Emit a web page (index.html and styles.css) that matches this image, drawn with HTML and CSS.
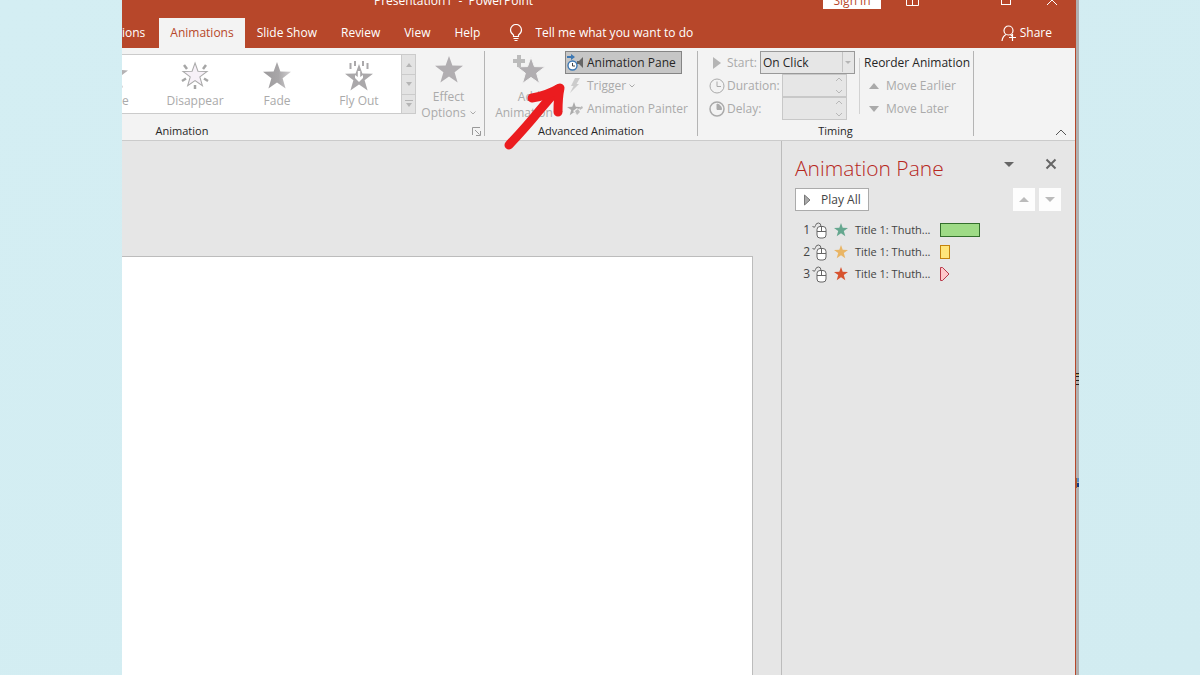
FILE: index.html
```html
<!DOCTYPE html>
<html lang="en">
<head>
<meta charset="utf-8">
<title>Presentation1 - PowerPoint</title>
<link rel="stylesheet" href="styles.css">
</head>
<body>
<svg class="defs" aria-hidden="true">
  <defs>
    <path id="star" d="M14 0 L17.4 9.6 L28 9.8 L19.6 16.2 L22.6 26.5 L14 20.4 L5.4 26.5 L8.4 16.2 L0 9.8 L10.6 9.6 Z"/>
    <linearGradient id="fade"><stop offset="0" stop-color="#9c9a9c"/><stop offset=".55" stop-color="#a8a6a8"/><stop offset="1" stop-color="#d2d0d2"/></linearGradient>
    <g id="mouse" fill="none" stroke="#666">
      <path d="M.5 4.500 Q3 6.500 3.500 3.500 Q4 1 6.500 1 Q9 1 9 4.500"/>
      <rect x="5" y="4.500" width="9" height="11.500" rx="3" fill="#fff"/>
      <path d="M5 9.500H14M9.500 4.500V9.500"/>
    </g>
  </defs>
</svg>
<div class="window">
  <div class="app">
    <header class="titlebar">
      <span class="title">Presentation1&nbsp; -&nbsp; PowerPoint</span>
      <button class="signin">Sign in</button>
      <button class="winbtn display" aria-label="Ribbon display options"><svg width="14" height="12"><path d="M.5.500H12.500V11.500H.5ZM.5 5.500H12.500M6.500 5.500V11.500" fill="none" stroke="#fff"/></svg></button>
      <button class="winbtn maximize" aria-label="Maximize"><svg width="12" height="10"><rect x="1.500" y=".5" width="9" height="9" fill="none" stroke="#fff"/></svg></button>
      <button class="winbtn" aria-label="Close"><svg width="12" height="10"><path d="M1 0L11 10M11 0L1 10" stroke="#fff"/></svg></button>
    </header>
    <nav class="tabs">
      <a class="tab cut" href="#">ions</a>
      <a class="tab active" href="#">Animations</a>
      <a class="tab" href="#">Slide Show</a>
      <a class="tab" href="#">Review</a>
      <a class="tab" href="#">View</a>
      <a class="tab" href="#">Help</a>
      <button class="tell"><svg width="14" height="18" fill="none" stroke="#fff" stroke-width="1.200"><path d="M4.500 12.500V11Q1.500 9 1.500 6A5.500 5.500 0 0 1 12.500 6Q12.500 9 9.500 11V12.500ZM4.500 14.500H9.500M5.500 16.500H8.500"/></svg>Tell me what you want to do</button>
      <button class="share"><svg width="16" height="17" fill="none" stroke="#fff" stroke-width="1.200"><circle cx="7.500" cy="5.500" r="4.500"/><path d="M1 16Q1.500 11.500 5 9.500M9.500 9.500L11 11M11.500 9V16M8 12.500H15"/></svg>Share</button>
    </nav>
    <section class="ribbon">
      <div class="group animation">
        <div class="tools">
          <div class="gallery">
            <button class="effect partial"><svg width="32" height="28"><path d="M0 9L6 9.500L0 14ZM0 24L1 27L0 26Z" fill="#b4b2b4"/></svg><span>e</span></button>
            <button class="effect"><svg width="30" height="28"><g transform="translate(3 2) scale(.86)"><use href="#star" fill="#f7f1f8" stroke="#aaa" stroke-width="1.200"/></g><path d="M4 4L7 8M26 4L23 8M2 20L6 17.500M28 20L24 17.500M15 24V28" stroke="#a6a6a6" stroke-width="2.500"/></svg><span>Disappear</span></button>
            <button class="effect"><svg width="28" height="28"><use href="#star" y="1" fill="url(#fade)"/></svg><span>Fade</span></button>
            <button class="effect"><svg width="28" height="30" viewBox="0 -1 28 30"><use href="#star" y="2" fill="#aaa8aa"/><path d="M5.500 1V7M10 -1V5M18 -1V5M22.500 1V7" stroke="#fff" stroke-width="4"/><path d="M5.500 1V7M10 -1V4M18 -1V4M22.500 1V7" stroke="#aaa8aa" stroke-width="2"/><path d="M12.800 9H15.200V15L18 13V16L14 20L10 16V13L12.800 15Z" fill="#fff"/></svg><span>Fly Out</span></button>
          </div>
          <div class="scroller">
            <button aria-label="Row up"><svg width="6" height="4"><path d="M0 4L3 0L6 4Z"/></svg></button>
            <button aria-label="Row down"><svg width="6" height="4"><path d="M0 0L3 4L6 0Z"/></svg></button>
            <button aria-label="More"><svg width="8" height="7"><path d="M0 0H8V1H0ZM1 3L4 7L7 3Z"/></svg></button>
          </div>
          <button class="big options"><svg width="28" height="28"><use href="#star" y="1" fill="#b1aeb1"/></svg><span>Effect</span><span>Options <svg class="caret" width="6" height="4"><path d="M.5.500L3 3L5.500.500"/></svg></span></button>
        </div>
        <h2>Animation</h2>
        <button class="launcher" aria-label="More animation options"><svg width="9" height="9" fill="none" stroke="#999"><path d="M.5 8V.500H8M3 3L7.500 7.500M4 8.500H8.500V4"/></svg></button>
      </div>
      <div class="group advanced">
        <div class="tools">
          <button class="big add"><svg width="32" height="30"><use href="#star" x="4" y="2" fill="#b1aeb1" stroke="#f3f3f3"/><path d="M4 0H8V4H12V8H8V12H4V8H0V4H4Z" fill="#bbb"/></svg><span>Add</span><span>Animation <svg class="caret" width="6" height="4"><path d="M.5.500L3 3L5.500.500"/></svg></span></button>
          <div class="stack">
            <button class="small pressed"><svg width="17" height="18"><path d="M0 2H4V0L8 3L4 6V4H0Z" fill="#3c78b4"/><circle cx="5.500" cy="11.500" r="4.500" fill="#fff" stroke="#3c78b4" stroke-width="1.400"/><path d="M5.500 9V12H8" fill="none" stroke="#444"/><path d="M10 7H12L16 3V14L12 10H10Z" fill="#666"/></svg>Animation Pane</button>
            <button class="small"><svg width="17" height="18"><path d="M8 1H13L9.500 7H12L3 16L6.500 9H4Z" fill="#ccc"/></svg>Trigger <svg class="caret" width="6" height="4"><path d="M.5.500L3 3L5.500.500"/></svg></button>
            <button class="small"><svg width="17" height="18"><g transform="translate(0 2) scale(.5)"><use href="#star" fill="#aaa"/></g><path d="M6 11L10 8L15 13L11 16Z" fill="#f3f3f3"/><path d="M8 11L11 9L13 12L10 15ZM12 8L15 6L16 8L13 10Z" fill="#bbb"/></svg>Animation Painter</button>
          </div>
        </div>
        <h2>Advanced Animation</h2>
        <svg class="arrow" width="72" height="108" fill="none" stroke="#eb1c1f" stroke-linecap="round" stroke-linejoin="round"><path d="M7 94Q24 76 37 60Q47 48 56 38" stroke-width="9"/><path d="M30 47Q44 45 58 37Q56 46 56 61" stroke-width="9"/></svg>
      </div>
      <div class="group timing">
        <div class="tools">
          <div class="fields">
            <svg width="16" height="16"><path d="M4 2L12 8L4 14Z" fill="#b5b5b5"/></svg>
            <label for="start">Start:</label>
            <div class="control start"><select id="start"><option>On Click</option></select><svg width="12" height="20"><path d="M.5 0V20" stroke="#c4c4c4"/><path d="M3 9H9L6 12Z" fill="#b5b5b5"/></svg></div>
            <svg width="16" height="16" fill="none" stroke="#aaa"><circle cx="8" cy="8" r="7"/><path d="M8 3.500V8.500H12"/></svg>
            <label for="duration">Duration:</label>
            <div class="control"><input id="duration" type="text" disabled><svg width="8" height="17"><path d="M1 4L4 1L7 4M1 13L4 16L7 13"/></svg></div>
            <svg width="16" height="16" fill="none" stroke="#aaa"><circle cx="8" cy="8" r="7" stroke-width="1.500"/><path d="M8 3V8.500H12.500Q12.500 4 8 3Z" fill="#aaa"/></svg>
            <label for="delay">Delay:</label>
            <div class="control"><input id="delay" type="text" disabled><svg width="8" height="17"><path d="M1 4L4 1L7 4M1 13L4 16L7 13"/></svg></div>
          </div>
          <div class="divider"></div>
          <div class="reorder">
            <span class="heading">Reorder Animation</span>
            <button class="move"><svg width="10" height="6"><path d="M0 6L5 0L10 6Z"/></svg>Move Earlier</button>
            <button class="move"><svg width="10" height="6"><path d="M0 0L5 6L10 0Z"/></svg>Move Later</button>
          </div>
        </div>
        <h2>Timing</h2>
      </div>
      <button class="collapse" aria-label="Collapse the ribbon"><svg width="12" height="7" fill="none" stroke="#555"><path d="M1 6L6 1L11 6"/></svg></button>
    </section>
    <main class="workspace">
      <div class="canvas"><div class="slide"></div></div>
      <aside class="pane">
        <div class="pane-head">
          <h1>Animation Pane</h1>
          <button aria-label="Pane options"><svg width="10" height="5"><path d="M0 0H10L5 5Z" fill="#666"/></svg></button>
          <button aria-label="Close pane"><svg width="12" height="12"><path d="M1.500 1.500L10.500 10.500M10.500 1.500L1.500 10.500" stroke="#666" stroke-width="2"/></svg></button>
        </div>
        <div class="pane-bar">
          <button class="play"><svg width="7" height="12"><path d="M.5 1L6 6L.5 11Z" fill="#aaa" stroke="#777"/></svg>Play All</button>
          <button class="step" aria-label="Move up"><svg width="10" height="5"><path d="M0 5L5 0L10 5Z"/></svg></button>
          <button class="step" aria-label="Move down"><svg width="10" height="5"><path d="M0 0L5 5L10 0Z"/></svg></button>
        </div>
        <ol class="effects">
          <li><span class="num">1</span><svg width="15" height="17"><use href="#mouse"/></svg><svg class="kind" width="14" height="14" viewBox="0 0 28 28"><use href="#star" fill="#65a78f"/></svg><span class="name">Title 1: Thuth...</span><svg width="40" height="14"><rect x=".5" y=".5" width="39" height="13" fill="#9edb86" stroke="#336f2c"/></svg></li>
          <li><span class="num">2</span><svg width="15" height="17"><use href="#mouse"/></svg><svg class="kind" width="14" height="14" viewBox="0 0 28 28"><use href="#star" fill="#e9b565"/></svg><span class="name">Title 1: Thuth...</span><svg width="10" height="14"><rect x=".5" y=".5" width="9" height="13" fill="#ffe57a" stroke="#c4830c"/></svg></li>
          <li><span class="num">3</span><svg width="15" height="17"><use href="#mouse"/></svg><svg class="kind" width="14" height="14" viewBox="0 0 28 28"><use href="#star" fill="#d7532f"/></svg><span class="name">Title 1: Thuth...</span><svg width="10" height="14"><path d="M.5.500H2.500L9 7L2.500 13.500H.5Z" fill="#ffc8cb" stroke="#b8394a"/></svg></li>
        </ol>
      </aside>
    </main>
  </div>
  <div class="edge">
    <svg class="mark upper" width="3" height="12"><path d="M0 .5H3M0 3.500H3M0 7.500H3M0 11.500H3" stroke="#222"/><path d="M0 1.500H3" stroke="#b49a4a"/></svg>
    <svg class="mark lower" width="3" height="10"><path d="M0 0H1V10H0Z" fill="#a5602a"/><path d="M1 0H3V4H1Z" fill="#5c8cc4"/><path d="M1 5H3V9H1Z" fill="#163a86"/></svg>
  </div>
</div>
</body>
</html>
```
FILE: styles.css
```css
* { box-sizing: border-box; }
body {
  margin: 0;
  background: linear-gradient(135deg, #d4eef3, #d2ecf1);
  font: 12px/16px "Open Sans", "Noto Sans", sans-serif;
  color: #262626;
}
button, input, select { font: inherit; color: inherit; }
button { border: 0; padding: 0; background: none; white-space: nowrap; }
svg { display: block; flex: none; }
h1, h2 { margin: 0; font-weight: 400; }
.defs { position: absolute; width: 0; height: 0; }

.window { display: flex; height: 100vh; margin: 0 121px 0 122px; overflow: hidden; }
.app { flex: 1; min-width: 0; display: flex; flex-direction: column; background: #e6e6e6; border-right: 1px solid #b7472a; }
.edge { position: relative; width: 3px; background: #b0b0b0; }
.mark { position: absolute; left: 0; }
.upper { top: 373px; }
.lower { top: 478px; }

.titlebar { display: flex; align-items: center; flex: none; height: 36px; margin-top: -18px; background: #b7472a; color: #fff; }
.title { flex: 1; padding: 2px 38px 0 0; text-align: center; }
.signin { width: 58px; height: 18px; padding-top: 1px; background: #fff; color: #b7472a; }
.winbtn { display: flex; justify-content: center; width: 46px; }
.display { width: 64px; }
.maximize { margin-left: 38px; }

.tabs { display: flex; flex: none; height: 30px; background: #b7472a; color: #fff; }
.tab { padding: 0 12px; line-height: 30px; color: #fff; text-decoration: none; white-space: nowrap; }
.tab.cut { padding: 0 14px 0 0; }
.tab.active { background: #f3f3f3; color: #b7472a; padding: 0 11px; }
.tell { display: flex; align-items: center; gap: 12px; margin-left: 17px; }
.share { display: flex; align-items: center; gap: 3px; margin: 0 23px 0 auto; }

.ribbon { display: flex; flex: none; height: 93px; padding: 3px 0 4px; background: #f3f3f3; border-bottom: 1px solid #cbcbcb; color: #aaa; }
.group { position: relative; display: flex; flex-direction: column; border-right: 1px solid #b4b4b4; }
.tools { display: flex; flex: 1; align-items: flex-start; }
h2 { font-size: 11px; line-height: 10px; text-align: center; color: #262626; }
.animation { width: 363px; }
.animation h2 { width: 120px; }
.advanced { width: 213px; }
.timing { width: 276px; }
.gallery { display: flex; width: 279px; height: 60px; margin-top: 3px; background: #fff; border: solid #cbcbcb; border-width: 1px 0; }
.effect { display: flex; flex-direction: column; align-items: center; justify-content: space-between; width: 82px; padding: 6px 0 4px; }
.partial { width: 32px; align-items: flex-start; }
.scroller { display: grid; grid-template-rows: 1fr 1fr 1fr; width: 15px; height: 60px; margin-top: 3px; border: 1px solid #cbcbcb; background: #e3e3e3; fill: #b5b5b5; }
.scroller button { display: grid; place-items: center; }
.scroller button + button { border-top: 1px solid #cbcbcb; }
.big { display: flex; flex-direction: column; align-items: center; }
.big > svg { margin-bottom: auto; }
.big > span { display: flex; align-items: center; gap: 4px; }
.options { width: 65px; height: 70px; padding-top: 4px; }
.add { width: 80px; height: 70px; padding: 4px 0 0 8px; }
.caret { fill: none; stroke: #aaa; }
.launcher { position: absolute; right: 3px; bottom: 0; }
.stack { display: flex; flex-direction: column; align-items: flex-start; }
.small { display: flex; align-items: center; gap: 3px; height: 23px; padding: 0 5px 0 1px; border: 1px solid transparent; }
.pressed { background: #c6c6c6; border-color: #858585; color: #262626; }
.arrow { position: absolute; left: 17px; top: 0; }

.fields { display: grid; grid-template-columns: 16px 1fr auto; grid-auto-rows: 23px; align-items: center; column-gap: 2px; width: 161px; padding: 0 4px 0 11px; }
.divider { width: 1px; height: 56px; margin-top: 7px; background: #d2d2d2; }
.control { position: relative; justify-self: end; margin-right: 8px; }
.control.start { margin: 0 0 0 -24px; }
.control input { display: block; width: 65px; height: 23px; padding: 0 14px 0 3px; border: 1px solid #c8c8c8; background: #e6e6e6; }
.control select { display: block; width: 95px; height: 23px; padding: 0 2px; appearance: none; border: 1px solid #999; border-radius: 0; background: #e6e6e6; color: #262626; }
.control svg { position: absolute; right: 4px; top: 3px; fill: none; stroke: #b8b8b8; pointer-events: none; }
.start svg { right: 1px; top: 1px; stroke: none; }
.reorder { display: grid; grid-auto-rows: 23px; align-items: center; padding-left: 4px; }
.heading { color: #262626; white-space: nowrap; }
.move { display: flex; align-items: center; gap: 7px; padding-left: 5px; fill: #aaa; }
.collapse { margin: auto 8px 0 auto; }

.workspace { display: flex; flex: 1; min-height: 0; }
.canvas { flex: 1; display: flex; padding: 115px 28px 0 0; }
.slide { flex: 1; background: #fff; border: solid #bcbcbc; border-width: 1px 1px 0 0; }
.pane { width: 294px; padding: 11px 14px 0 13px; border-left: 1px solid #bcbcbc; color: #444; }
.pane-head { display: flex; align-items: center; gap: 31px; padding-right: 4px; }
.pane-head h1 { flex: 1; font-size: 21px; line-height: 32px; font-weight: 300; color: #b7281e; white-space: nowrap; }
.pane-head button { margin-top: -8px; }
.pane-bar { display: flex; gap: 4px; margin-top: 4px; }
.play { display: flex; align-items: center; gap: 10px; height: 23px; margin-right: auto; padding: 0 7px 0 8px; border: 1px solid #ababab; background: #fff; }
.step { display: grid; place-items: center; width: 22px; height: 23px; background: #fdfdfd; fill: #bbb; }
.effects { list-style: none; margin: 8px 0 0; padding: 0; }
.effects li { display: flex; align-items: center; height: 22px; }
.num { width: 15px; margin-right: 2px; text-align: right; }
.kind { margin: 0 7px; }
.name { width: 85px; font-size: 11px; white-space: nowrap; }
```
